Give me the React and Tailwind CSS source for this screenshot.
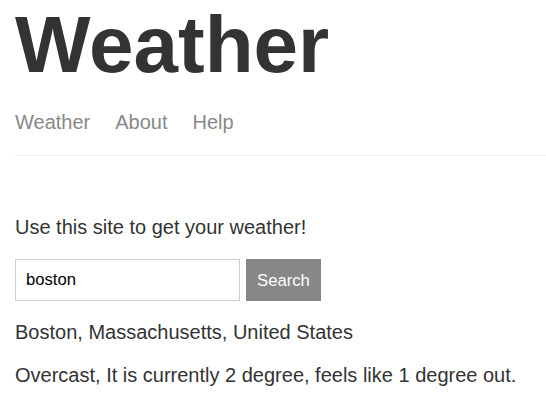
import { useState } from 'react'

const NAV = ['Weather', 'About', 'Help']

export default function App() {
  const [query, setQuery] = useState('boston')

  return (
    <div className="min-h-[400px] bg-white pl-[15px] text-[#333333] font-['Liberation_Sans',Arial,sans-serif]">
      {/* Header */}
      <header className="border-b border-[#eeeeee] pb-[21px]">
        <h1 className="text-[80px] font-bold leading-[88px] pt-[1px]">Weather</h1>
        <nav className="mt-[22px] flex gap-[25px] text-[20px] leading-[23px]">
          {NAV.map(n => (
            <a key={n} href="#" className="text-[#888888] no-underline">{n}</a>
          ))}
        </nav>
      </header>

      {/* Body */}
      <main className="pt-[60px] text-[20px] leading-[23px]">
        <p>Use this site to get your weather!</p>
        <form className="mt-[20px] flex gap-[6px]" onSubmit={e => e.preventDefault()}>
          <input
            value={query}
            onChange={e => setQuery(e.target.value)}
            className="w-[225px] h-[42px] border border-[#cccccc] px-[10px] text-[16.67px] text-black outline-none"
          />
          <button className="w-[75px] h-[42px] border border-[#888888] bg-[#888888] text-white text-[16.67px] cursor-pointer">
            Search
          </button>
        </form>
        <p className="mt-[20px]">Boston, Massachusetts, United States</p>
        <p className="mt-[20px]">Overcast, It is currently 2 degree, feels like 1 degree out.</p>
      </main>
    </div>
  )
}
